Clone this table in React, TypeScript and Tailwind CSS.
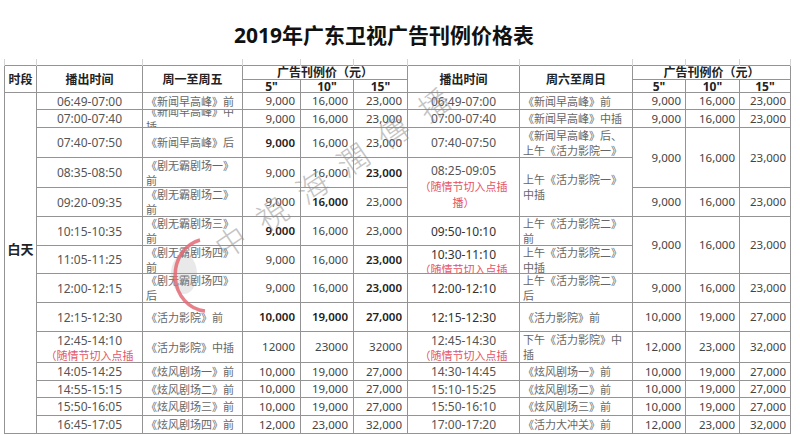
import React from "react";

// grid line + cell reset
const line = "border border-[#949494] p-0";

const hs = [
  "h-[16px]", "h-[17px]", "h-[29px]", "h-[29px]", "h-[28px]", "h-[28px]", "h-[27px]",
  "h-[28px]", "h-[28px]", "h-[30px]", "h-[17px]", "h-[16px]", "h-[17px]", "h-[17px]",
];

const P9 = ["9,000", "16,000", "23,000"];
const P10 = ["10,000", "19,000", "27,000"];
const P12 = ["12,000", "23,000", "32,000"];

const Red = ({ children }: { children: React.ReactNode }) => (
  <div className="whitespace-nowrap text-[11px] leading-[15px] text-[#e5535f]">{children}</div>
);

// time cell (centered)
const Time = ({ h, lines, top, rs, dark }: { h: string; lines: React.ReactNode[]; top?: boolean; rs?: number; dark?: boolean }) => (
  <td rowSpan={rs} className={line}>
    <div className={`${h} overflow-hidden flex flex-col items-center text-center ${top ? "justify-start pt-[1px]" : "justify-center"}`}>
      {lines.map((l, i) =>
        typeof l === "string" ? (
          <div key={i} className={`whitespace-nowrap text-[12px] leading-[15px] ${dark ? "text-[#333]" : "text-[#555]"}`}>{l}</div>
        ) : (
          <React.Fragment key={i}>{l}</React.Fragment>
        )
      )}
    </div>
  </td>
);

// program cell (left aligned)
const Prog = ({ h, lines, rs }: { h: string; lines: string[]; rs?: number }) => (
  <td rowSpan={rs} className={line}>
    <div className={`${h} overflow-hidden flex flex-col justify-center items-start pl-[3px]`}>
      {lines.map((l, i) => (
        <div key={i} className="whitespace-nowrap text-[11px] leading-[15px] text-[#666]">{l}</div>
      ))}
    </div>
  </td>
);

// price cells (right aligned)
const Prices = ({ h, v, rs, bold = [], pr = "pr-[5px]" }: { h: string; v: string[]; rs?: number; bold?: number[]; pr?: string }) => (
  <>
    {v.map((n, i) => (
      <td key={i} rowSpan={rs} className={line}>
        <div className={`${h} flex items-center justify-end ${pr} text-[11.5px] ${bold.includes(i) ? "font-semibold text-[#222]" : "text-[#444]"}`}>{n}</div>
      </td>
    ))}
  </>
);

const left = [
  { t: "06:49-07:00", p: ["《新闻早高峰》前"], v: P9 },
  { t: "07:00-07:40", p: ["《新闻早高峰》中", "插"], v: P9 },
  { t: "07:40-07:50", p: ["《新闻早高峰》后"], v: P9, b: [0] },
  { t: "08:35-08:50", p: ["《剧无霸剧场一》", "前"], v: P9, b: [2] },
  { t: "09:20-09:35", p: ["《剧无霸剧场二》", "前"], v: P9, b: [1] },
  { t: "10:15-10:35", p: ["《剧无霸剧场三》", "前"], v: P9, b: [0] },
  { t: "11:05-11:25", p: ["《剧无霸剧场四》", "前"], v: P9, b: [2] },
  { t: "12:00-12:15", p: ["《剧无霸剧场四》", "后"], v: P9, b: [2] },
  { t: "12:15-12:30", p: ["《活力影院》前"], v: P10, b: [0, 1, 2] },
  { t: "12:45-14:10", red: true, p: ["《活力影院》中插"], v: ["12000", "23000", "32000"] },
  { t: "14:05-14:25", p: ["《炫风剧场一》前"], v: P10 },
  { t: "14:55-15:15", p: ["《炫风剧场二》前"], v: P10 },
  { t: "15:50-16:05", p: ["《炫风剧场三》前"], v: P10 },
  { t: "16:45-17:05", p: ["《炫风剧场四》前"], v: P12 },
];

const rp = "pr-[4px]";

// weekend side, cell by cell (merged cells only appear in their first row)
const right: React.ReactNode[][] = [
  [
    <Time key="t" h={hs[0]} lines={["06:49-07:00"]} />,
    <Prog key="p" h={hs[0]} lines={["《新闻早高峰》前"]} />,
    <Prices key="v" h={hs[0]} v={P9} pr={rp} />,
  ],
  [
    <Time key="t" h={hs[1]} lines={["07:00-07:40"]} />,
    <Prog key="p" h={hs[1]} lines={["《新闻早高峰》中插"]} />,
    <Prices key="v" h={hs[1]} v={P9} pr={rp} />,
  ],
  [
    <Time key="t" h={hs[2]} lines={["07:40-07:50"]} />,
    <Prog key="p" h={hs[2]} lines={["《新闻早高峰》后、", "上午《活力影院一》"]} />,
    <Prices key="v" h="h-[59px]" rs={2} v={P9} pr={rp} />,
  ],
  [
    <td key="t" rowSpan={2} className={line}>
      <div className="h-[58px] flex flex-col items-center justify-center text-center">
        <div className="whitespace-nowrap text-[12px] leading-[16px] text-[#555]">08:25-09:05</div>
        <div className="whitespace-nowrap text-[11px] leading-[16px] text-[#e5535f]">（随情节切入点插</div>
        <div className="whitespace-nowrap text-[11px] leading-[16px] text-[#e5535f]">播）</div>
      </div>
    </td>,
    <Prog key="p" h="h-[58px]" rs={2} lines={["上午《活力影院一》", "中插"]} />,
  ],
  [<Prices key="v" h={hs[4]} v={P9} pr={rp} />],
  [
    <Time key="t" h={hs[5]} lines={["09:50-10:10"]} dark />,
    <Prog key="p" h={hs[5]} lines={["上午《活力影院二》", "前"]} />,
    <Prices key="v" h="h-[56px]" rs={2} v={P9} pr={rp} />,
  ],
  [
    <Time key="t" h={hs[6]} top dark lines={["10:30-11:10", <Red key="r">（随情节切入点插</Red>, <Red key="r2">播）</Red>]} />,
    <Prog key="p" h={hs[6]} lines={["上午《活力影院二》", "中插"]} />,
  ],
  [
    <Time key="t" h={hs[7]} lines={["12:00-12:10"]} dark />,
    <Prog key="p" h={hs[7]} lines={["上午《活力影院二》", "后"]} />,
    <Prices key="v" h={hs[7]} v={P9} pr={rp} />,
  ],
  [
    <Time key="t" h={hs[8]} lines={["12:15-12:30"]} dark />,
    <Prog key="p" h={hs[8]} lines={["《活力影院》前"]} />,
    <Prices key="v" h={hs[8]} v={P10} pr={rp} />,
  ],
  [
    <Time key="t" h={hs[9]} top lines={["12:45-14:30", <Red key="r">（随情节切入点插</Red>, <Red key="r2">播）</Red>]} />,
    <Prog key="p" h={hs[9]} lines={["下午《活力影院》中", "插"]} />,
    <Prices key="v" h={hs[9]} v={P12} pr={rp} />,
  ],
  [
    <Time key="t" h={hs[10]} lines={["14:30-14:45"]} />,
    <Prog key="p" h={hs[10]} lines={["《炫风剧场一》前"]} />,
    <Prices key="v" h={hs[10]} v={P10} pr={rp} />,
  ],
  [
    <Time key="t" h={hs[11]} lines={["15:10-15:25"]} />,
    <Prog key="p" h={hs[11]} lines={["《炫风剧场二》前"]} />,
    <Prices key="v" h={hs[11]} v={P10} pr={rp} />,
  ],
  [
    <Time key="t" h={hs[12]} lines={["15:50-16:10"]} />,
    <Prog key="p" h={hs[12]} lines={["《炫风剧场三》前"]} />,
    <Prices key="v" h={hs[12]} v={P10} pr={rp} />,
  ],
  [
    <Time key="t" h={hs[13]} lines={["17:00-17:20"]} />,
    <Prog key="p" h={hs[13]} lines={["《活力大冲关》前"]} />,
    <Prices key="v" h={hs[13]} v={P12} pr={rp} />,
  ],
];

const Head = ({ children, rs, cs, h }: { children: React.ReactNode; rs?: number; cs?: number; h: string }) => (
  <td rowSpan={rs} colSpan={cs} className={line}>
    <div className={`${h} overflow-hidden flex items-center justify-center whitespace-nowrap text-[12px] leading-[13px] font-bold text-[#222]`}>{children}</div>
  </td>
);

export default function App() {
  return (
    <div className="relative w-[800px] h-[435px] overflow-hidden bg-white font-['Noto_Sans','Noto_Sans_CJK_SC',sans-serif]">
      <div className="h-[59px] pt-[22px] flex justify-center pr-[32px]">
        <h1 className="text-[21px] leading-[26px] font-bold text-[#111]">2019年广东卫视广告刊例价格表</h1>
      </div>

      <table className="ml-[4px] w-[786px] table-fixed border-collapse">
        <colgroup>
          <col className="w-[32px]" />
          <col className="w-[106px]" />
          <col className="w-[100px]" />
          <col className="w-[58px]" />
          <col className="w-[53px]" />
          <col className="w-[54px]" />
          <col className="w-[112px]" />
          <col className="w-[113px]" />
          <col className="w-[53px]" />
          <col className="w-[54px]" />
          <col className="w-[51px]" />
        </colgroup>
        <tbody>
          {/* faint grid left over from the sheet above */}
          <tr>
            {Array.from({ length: 11 }).map((_, i) => (
              <td key={i} className="border-x border-[#d4d4d4] p-0">
                <div className="h-[6px]" />
              </td>
            ))}
          </tr>
          <tr>
            <Head rs={2} h="h-[26px]">时段</Head>
            <Head rs={2} h="h-[26px]">播出时间</Head>
            <Head rs={2} h="h-[26px]">周一至周五</Head>
            <Head cs={3} h="h-[13px]">广告刊例价（元）</Head>
            <Head rs={2} h="h-[26px]">播出时间</Head>
            <Head rs={2} h="h-[26px]">周六至周日</Head>
            <Head cs={3} h="h-[13px]">广告刊例价（元）</Head>
          </tr>
          <tr>
            <Head h="h-[12px]">5"</Head>
            <Head h="h-[12px]">10"</Head>
            <Head h="h-[12px]">15"</Head>
            <Head h="h-[12px]">5"</Head>
            <Head h="h-[12px]">10"</Head>
            <Head h="h-[12px]">15"</Head>
          </tr>
          {left.map((r, i) => (
            <tr key={r.t}>
              {i === 0 && (
                <td rowSpan={14} className={line}>
                  <div className="flex items-center justify-center pb-[26px] text-[13px] font-bold text-[#222]">白天</div>
                </td>
              )}
              {r.red ? (
                <Time h={hs[i]} top lines={[r.t, <Red key="r">（随情节切入点插</Red>, <Red key="r2">播）</Red>]} />
              ) : (
                <Time h={hs[i]} lines={[r.t]} />
              )}
              <Prog h={hs[i]} lines={r.p} />
              <Prices h={hs[i]} v={r.v} bold={r.b} />
              {right[i]}
            </tr>
          ))}
        </tbody>
      </table>

      {/* watermark */}
      <div className="pointer-events-none absolute left-[180px] top-[150px] w-[320px] rotate-[-34deg] text-center text-[31px] leading-[36px] tracking-[18px] font-light text-[#8a8a8a] opacity-50 whitespace-nowrap">
        中視海潤傳播
      </div>
      <svg className="pointer-events-none absolute left-0 top-0" width="800" height="435" viewBox="0 0 800 435">
        <ellipse cx="184" cy="274" rx="13" ry="20" fill="#9a9a9a" opacity="0.22" />
        <path d="M 200 240 A 32 36 0 0 0 205 311" fill="none" stroke="#e46a74" strokeWidth="3.5" opacity="0.85" />
      </svg>
    </div>
  );
}
